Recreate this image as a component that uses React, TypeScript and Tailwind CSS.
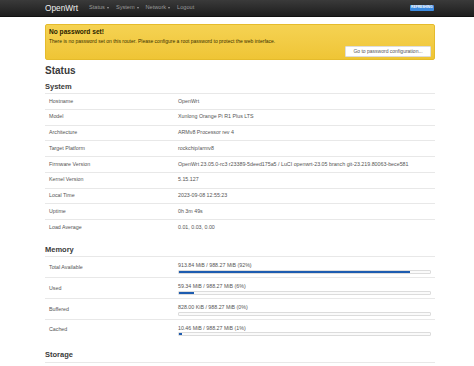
import React from "react";

const sysRows: [string, string][] = [
  ["Hostname", "OpenWrt"],
  ["Model", "Xunlong Orange Pi R1 Plus LTS"],
  ["Architecture", "ARMv8 Processor rev 4"],
  ["Target Platform", "rockchip/armv8"],
  ["Firmware Version", "OpenWrt 23.05.0-rc3 r23389-5deed175a5 / LuCI openwrt-23.05 branch git-23.219.80063-bece581"],
  ["Kernel Version", "5.15.127"],
  ["Local Time", "2023-09-08 12:55:23"],
  ["Uptime", "0h 3m 49s"],
  ["Load Average", "0.01, 0.03, 0.00"],
];

const memRows: [string, string, number][] = [
  ["Total Available", "913.84 MiB / 988.27 MiB (92%)", 92],
  ["Used", "59.34 MiB / 988.27 MiB (6%)", 6],
  ["Buffered", "828.00 KiB / 988.27 MiB (0%)", 0],
  ["Cached", "10.46 MiB / 988.27 MiB (1%)", 1],
];

function Caret() {
  return <span className="ml-[2px] inline-block align-middle border-l-[1.5px] border-r-[1.5px] border-t-[2px] border-l-transparent border-r-transparent border-t-[#9a9a9a]" />;
}

export default function App() {
  return (
    <div className="w-[474px] h-[366px] overflow-hidden bg-white text-[#404040]" style={{ fontFamily: '"Liberation Sans", Arial, sans-serif' }}>
      <div className="h-[17px] bg-gradient-to-b from-[#3a3a3a] to-[#1e1e1e] border-b border-[#111]">
        <div className="ml-[45px] w-[390px] h-full flex items-center">
          <span className="text-[8.3px] leading-none text-[#f0f0f0] mr-[11px]">OpenWrt</span>
          <div className="flex items-center gap-[6px] text-[5.6px] leading-none text-[#9a9a9a]">
            <span className="flex items-center">Status <Caret /></span>
            <span className="flex items-center ml-[1px]">System <Caret /></span>
            <span className="flex items-center ml-[1px]">Network <Caret /></span>
            <span className="ml-[1px]">Logout</span>
          </div>
          <span className="ml-auto mr-[1px] bg-[#3b8ae0] text-white text-[3.4px] font-bold leading-none px-[1.5px] py-[1.5px] rounded-[1px] tracking-tight">REFRESHING</span>
        </div>
      </div>

      <div className="ml-[45px] w-[390px]">
        <div className="mt-[7px] h-[36px] rounded-[2px] border border-[#e5bb2c] bg-gradient-to-b from-[#f5d252] to-[#efc535] pl-[3px] pr-[3px] pt-[4px] flex flex-col">
          <div className="text-[6.6px] font-bold leading-none text-[#2a2300]">No password set!</div>
          <div className="mt-[3px] text-[5px] leading-none text-[#3a3000]">There is no password set on this router. Please configure a root password to protect the web interface.</div>
          <div className="mt-auto mb-[2px] self-end">
            <div className="w-[86px] h-[11px] bg-white rounded-[1px] border border-[#ddd] flex items-center justify-center text-[5px] leading-none text-[#555]">Go to password configuration...</div>
          </div>
        </div>

        <h2 className="mt-[6px] text-[10px] font-bold leading-none text-[#3a3a3a]">Status</h2>
        <h3 className="mt-[6.5px] text-[7.5px] font-bold leading-none text-[#3a3a3a]">System</h3>
        <div className="mt-[3px]">
          {sysRows.map(([k, v]) => (
            <div key={k} className="h-[15.75px] border-t border-[#e8e8e8] flex items-center text-[5.3px] leading-none text-[#555]">
              <div className="w-[133px] pl-[4px] shrink-0">{k}</div>
              <div className="whitespace-nowrap">{v}</div>
            </div>
          ))}
        </div>

        <h3 className="mt-[10.8px] text-[7.5px] font-bold leading-none text-[#3a3a3a]">Memory</h3>
        <div className="mt-[3.4px]">
          {memRows.map(([k, v, p]) => (
            <div key={k} className="h-[20.9px] border-t border-[#e8e8e8] flex items-center text-[5.3px] leading-none text-[#555]">
              <div className="w-[133px] pl-[4px] shrink-0">{k}</div>
              <div className="flex flex-col gap-[1.5px] pt-[2px]">
                <div className="whitespace-nowrap">{v}</div>
                <div className="w-[253px] h-[4px] border-[0.6px] border-[#dcdcdc] rounded-[1px] bg-[#fafafa] overflow-hidden">
                  <div className="h-full bg-[#1d5cb0]" style={{ width: `${p}%` }} />
                </div>
              </div>
            </div>
          ))}
        </div>

        <h3 className="mt-[10.5px] text-[7.5px] font-bold leading-none text-[#3a3a3a]">Storage</h3>
        <div className="mt-[4px] border-t border-[#e8e8e8]" />
      </div>
    </div>
  );
}
